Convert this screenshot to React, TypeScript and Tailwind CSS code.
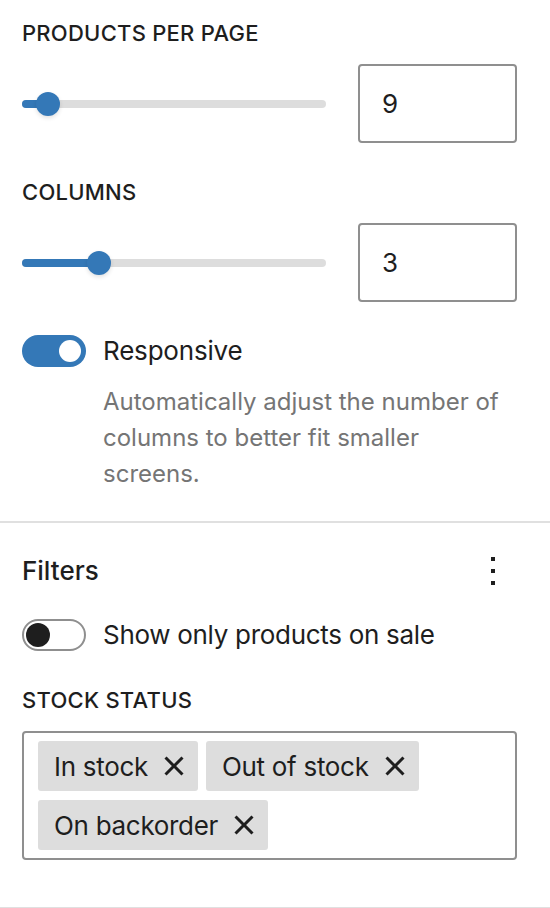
import React from "react";

const BLUE = "bg-[#3478b7]";

function RangeRow({ value, pct }: { value: number; pct: number }) {
  return (
    <div className="mt-[20px] flex items-center gap-[32px]">
      <div className="relative h-[8px] flex-1 rounded-full bg-[#dddddd]">
        <div className={`absolute left-0 top-0 h-full rounded-full ${BLUE}`} style={{ width: `${pct}%` }} />
        <div
          className={`absolute top-1/2 h-[24px] w-[24px] -translate-x-1/2 -translate-y-1/2 rounded-full ${BLUE} shadow-[0_2px_4px_rgba(0,0,0,0.12)]`}
          style={{ left: `${pct}%` }}
        />
      </div>
      <div className="flex h-[79px] w-[159px] items-center rounded-[4px] border-2 border-[#8f8f8f] pl-[22px] text-[26px] text-[#1e1e1e]">
        {value}
      </div>
    </div>
  );
}

function Label({ children, className = "" }: { children: React.ReactNode; className?: string }) {
  return (
    <div className={`text-[22px] font-medium uppercase leading-[22px] tracking-[0.25px] text-[#1e1e1e] ${className}`}>
      {children}
    </div>
  );
}

function Token({ label }: { label: string }) {
  return (
    <div className="flex h-[50px] items-center rounded-[3px] bg-[#dddddd] pl-[16px] pr-[14px] text-[26px] tracking-[-0.3px] text-[#1e1e1e]">
      <span>{label}</span>
      <svg className="ml-[16px] h-[20px] w-[20px]" viewBox="7 7 10 10" fill="currentColor">
        <path d="M12 13.06l3.712 3.713 1.061-1.06L13.061 12l3.712-3.712-1.06-1.06L12 10.938 8.288 7.227l-1.061 1.06L10.939 12l-3.712 3.712 1.06 1.061L12 13.061z" />
      </svg>
    </div>
  );
}

export default function App() {
  return (
    <div className="w-[550px] bg-white font-['Inter',sans-serif] text-[#1e1e1e]">
      {/* layout section */}
      <div className="pb-[29px] pl-[22px] pr-[33px] pt-[22px]">
        <Label>Products per page</Label>
        <RangeRow value={9} pct={8.6} />

        <Label className="mt-[38px]">Columns</Label>
        <RangeRow value={3} pct={25.3} />

        <div className="mt-[33px] flex items-center gap-[17px]">
          <div className={`relative h-[32px] w-[64px] rounded-full ${BLUE}`}>
            <div className="absolute right-[5px] top-[5px] h-[22px] w-[22px] rounded-full bg-white" />
          </div>
          <span className="text-[26px] leading-[32px] tracking-[-0.2px]">Responsive</span>
        </div>
        <p className="ml-[81px] mt-[17px] text-[24px] leading-[36px] text-[#757575]">
          Automatically adjust the number of columns to better fit smaller screens.
        </p>
      </div>

      <div className="h-[2px] bg-[#e0e0e0]" />

      {/* filters section */}
      <div className="pb-[47px] pl-[22px] pr-[33px] pt-[24px]">
        <div className="flex h-[48px] items-center justify-between">
          <span className="text-[26px] font-medium leading-[32px]">Filters</span>
          <svg className="h-[48px] w-[48px]" viewBox="0 0 24 24" fill="#1e1e1e">
            <path d="M13 19h-2v-2h2v2zm0-6h-2v-2h2v2zm0-6h-2V5h2v2z" />
          </svg>
        </div>

        <div className="mt-[24px] flex items-center gap-[17px]">
          <div className="relative h-[32px] w-[64px] rounded-full border-2 border-[#8f8f8f] bg-white">
            <div className="absolute left-[2px] top-[2px] h-[24px] w-[24px] rounded-full bg-[#1e1e1e]" />
          </div>
          <span className="text-[26px] leading-[32px] tracking-[-0.3px]">Show only products on sale</span>
        </div>

        <Label className="mt-[38px]">Stock status</Label>

        <div className="mt-[20px] flex flex-wrap gap-x-[8px] gap-y-[9px] rounded-[4px] border-2 border-[#8f8f8f] px-[14px] py-[8px]">
          <Token label="In stock" />
          <Token label="Out of stock" />
          <Token label="On backorder" />
        </div>
      </div>

      <div className="h-[2px] bg-[#e0e0e0]" />
    </div>
  );
}
